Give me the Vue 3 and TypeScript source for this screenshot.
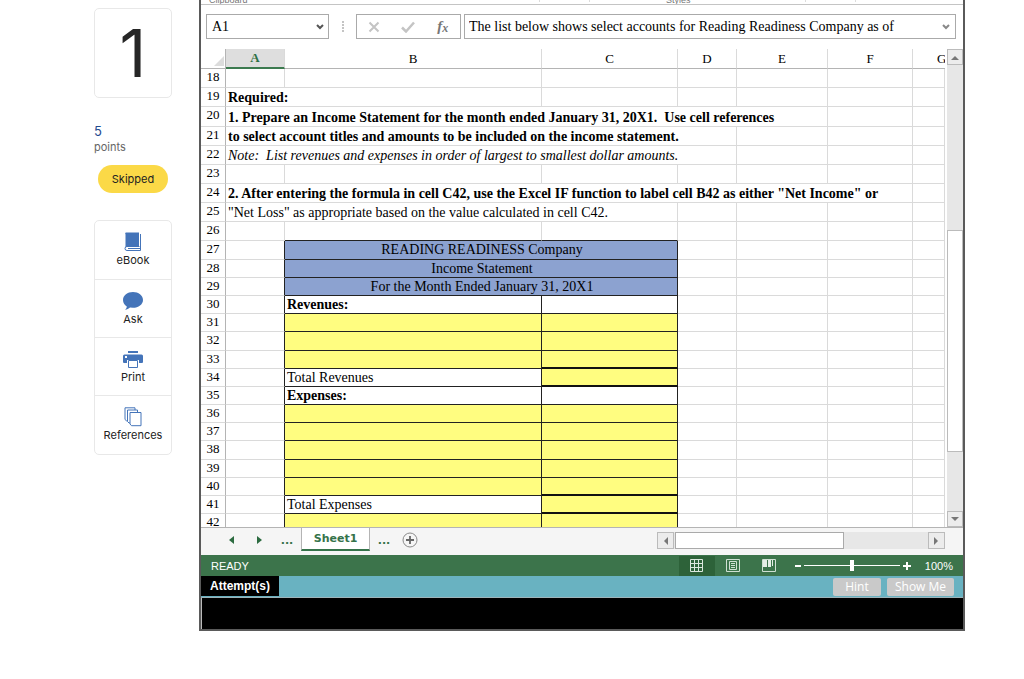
<script setup lang="ts">
import { ref } from 'vue'

interface Cell {
  text?: string
  span?: number
  cls?: string
}
interface Row {
  n: number
  size: string
  cells: Cell[]
}

const columns = ['A', 'B', 'C', 'D', 'E', 'F', 'G']

function plain(n: number, size = 'mid'): Row {
  return { n, size, cells: columns.map(() => ({})) }
}

function note(n: number, text: string, span: number, cls: string, size = 'mid'): Row {
  const rest: Cell[] = Array.from({ length: 7 - span }, () => ({}))
  return { n, size, cells: [{ text, span, cls: `note ${cls}` }, ...rest] }
}

function statement(n: number, b: Cell, c: Cell | null, size = 'low'): Row {
  const cells: Cell[] = [{ cls: 'edge' }, { ...b, cls: `box ${b.cls ?? ''}` }]
  if (c) cells.push({ ...c, cls: `box ${c.cls ?? ''}` })
  return { n, size, cells: [...cells, {}, {}, {}, {}] }
}

const title = (n: number, text: string, size = 'low') =>
  statement(n, { text, span: 2, cls: 'title' }, null, size)
const entry = (n: number, size = 'low', right = '') =>
  statement(n, { cls: 'input' }, { cls: `input ${right}` }, size)

const rows: Row[] = [
  plain(18),
  note(19, 'Required:', 2, 'bold'),
  note(20, '1. Prepare an Income Statement for the month ended January 31, 20X1.\u00a0 Use cell references', 5, 'bold', 'high'),
  note(21, 'to select account titles and amounts to be included on the income statement.', 4, 'bold'),
  note(22, 'Note:\u00a0 List revenues and expenses in order of largest to smallest dollar amounts.', 4, 'italic'),
  plain(23),
  note(24, '2. After entering the formula in cell C42, use the Excel IF function to label cell B42 as either "Net Income" or', 6, 'bold'),
  note(25, '"Net Loss" as appropriate based on the value calculated in cell C42.', 3, ''),
  { n: 26, size: 'mid', cells: [{}, { cls: 'base' }, { cls: 'base' }, {}, {}, {}, {}] },
  title(27, 'READING READINESS Company', 'mid'),
  title(28, 'Income Statement'),
  title(29, 'For the Month Ended January 31, 20X1'),
  statement(30, { text: 'Revenues:', cls: 'bold' }, {}),
  entry(31),
  entry(32, 'mid'),
  entry(33, 'low', 'thick'),
  statement(34, { text: 'Total Revenues' }, { cls: 'input thick' }),
  statement(35, { text: 'Expenses:', cls: 'bold' }, {}),
  entry(36),
  entry(37),
  entry(38, 'mid'),
  entry(39),
  entry(40, 'low', 'thick'),
  statement(41, { text: 'Total Expenses' }, { cls: 'input thick' }),
  entry(42),
]

const tools = ['eBook', 'Ask', 'Print', 'References']
const formula = ref('The list below shows select accounts for Reading Readiness Company as of')
const cellName = ref('A1')
const zoom = ref(50)
</script>

<template>
  <div class="page">
    <aside class="side">
      <div class="number">1</div>
      <div class="score"><a href="#">5</a><span>points</span></div>
      <div class="status">Skipped</div>
      <nav class="tools">
        <button v-for="tool in tools" :key="tool" type="button">
          <svg v-if="tool === 'eBook'" width="20" height="20" viewBox="0 0 20 20">
            <path d="M3 .5h13v14H4.500a2 2 0 0 0-2 2V2.500Q1.500.5 3 .5z" fill="#4474b9" />
            <path d="M17.500 2v16.500H4A2 2 0 0 1 4 14.500h12.500M5 16.500h12" fill="none" stroke="#4474b9" />
          </svg>
          <svg v-else-if="tool === 'Ask'" width="20" height="20" viewBox="0 0 20 20">
            <path d="M10 1c5.500 0 10 3.500 10 8s-4.500 7.800-10 7.800l-3-.3c-1.200 1.300-3 2-5 2.200 1.200-1 1.800-2 1.800-3.200C1.500 14 0 11.700 0 9c0-4.500 4.500-8 10-8z" fill="#4474b9" />
          </svg>
          <svg v-else-if="tool === 'Print'" width="20" height="20" viewBox="0 0 20 20">
            <path d="M5 2h10v2H5z" fill="#4474b9" />
            <path d="M1.500 5.500h17q1.500 0 1.500 1.500v6q0 1-1 1h-3v-3H4v3H1q-1 0-1-1V7q0-1.500 1.500-1.500z" fill="#4474b9" />
            <path d="M5.500 11.500h9v7h-9z" fill="#fff" stroke="#4474b9" />
            <path d="M2 7h2v2H2z" fill="#fff" />
          </svg>
          <svg v-else width="20" height="20" viewBox="0 0 20 20" fill="#fff" stroke="#4474b9">
            <path d="M2 .8h10v13H3.500L2 12.500z" />
            <path d="M4.500 3h10v13H6l-1.500-1.500z" />
            <path d="M7 5.500h11v13.200H8.500L7 17z" />
          </svg>
          <span>{{ tool }}</span>
        </button>
      </nav>
    </aside>

    <main class="window">
      <div class="ribbon">
        <div class="group first">Clipboard</div>
        <div class="group small"></div>
        <div class="group styles">Styles</div>
        <div class="group small"></div>
      </div>

      <div class="formulabar">
        <div class="namebox">
          <input v-model="cellName" aria-label="Cell name" />
          <svg width="8" height="6" viewBox="0 0 8 6"><path d="M1 1l3 3 3-3" fill="none" stroke="#555" stroke-width="2" /></svg>
        </div>
        <span class="dots"><i></i><i></i><i></i><i></i></span>
        <div class="actions">
          <button type="button" aria-label="Cancel">
            <svg width="12" height="12" viewBox="0 0 12 12"><path d="M1.500 1.500l9 9m0-9l-9 9" stroke="#c4c4c4" stroke-width="2" /></svg>
          </button>
          <button type="button" aria-label="Enter">
            <svg width="14" height="12" viewBox="0 0 14 12"><path d="M1 6.500l4 4 8-9" fill="none" stroke="#c4c4c4" stroke-width="2.500" /></svg>
          </button>
          <button type="button" aria-label="Insert function" class="fx">f<small>x</small></button>
        </div>
        <div class="formula">
          <input v-model="formula" aria-label="Formula" />
          <svg width="8" height="6" viewBox="0 0 8 6"><path d="M1 1l3 3 3-3" fill="none" stroke="#888" stroke-width="2" /></svg>
        </div>
      </div>

      <div class="gridpane">
        <div class="viewport">
          <table>
            <colgroup>
              <col class="w-head" /><col class="w-a" /><col /><col class="w-c" />
              <col class="w-d" /><col class="w-e" /><col class="w-f" /><col class="w-g" />
            </colgroup>
            <thead>
              <tr>
                <th class="corner"><svg width="12" height="12" viewBox="0 0 12 12"><path d="M11 1v10H1z" fill="#dcdcdc" /></svg></th>
                <th v-for="c in columns" :key="c" scope="col" :class="{ active: c === 'A', last: c === 'G' }">{{ c }}</th>
              </tr>
            </thead>
            <tbody>
              <tr v-for="row in rows" :key="row.n" :class="row.size">
                <th scope="row">{{ row.n }}</th>
                <td v-for="(cell, i) in row.cells" :key="i" :colspan="cell.span ?? 1" :class="cell.cls">{{ cell.text }}</td>
              </tr>
            </tbody>
          </table>
        </div>
        <div class="vscroll">
          <button type="button" aria-label="Scroll up"><svg width="8" height="5" viewBox="0 0 8 5"><path d="M0 5l4-4 4 4z" fill="#777" /></svg></button>
          <div class="vtrack"><div class="vthumb"></div></div>
          <button type="button" aria-label="Scroll down"><svg width="8" height="5" viewBox="0 0 8 5"><path d="M0 0l4 4 4-4z" fill="#777" /></svg></button>
        </div>
      </div>

      <div class="tabs">
        <button type="button" class="step" aria-label="Previous sheet"><svg width="5" height="8" viewBox="0 0 5 8"><path d="M5 0v8L0 4z" fill="#2c6b40" /></svg></button>
        <button type="button" class="step" aria-label="Next sheet"><svg width="5" height="8" viewBox="0 0 5 8"><path d="M0 0v8l5-4z" fill="#2c6b40" /></svg></button>
        <span class="more">...</span>
        <button type="button" class="sheet">Sheet1</button>
        <span class="more">...</span>
        <button type="button" class="add" aria-label="Add sheet">
          <svg width="16" height="16" viewBox="0 0 16 16"><circle cx="8" cy="8" r="7" fill="none" stroke="#8a8a8a" /><path d="M4 8h8M8 4v8" stroke="#666" stroke-width="1.800" /></svg>
        </button>
        <div class="hscroll">
          <button type="button" aria-label="Scroll left"><svg width="5" height="8" viewBox="0 0 5 8"><path d="M5 0v8L1 4z" fill="#777" /></svg></button>
          <div class="htrack"><div class="hthumb"></div></div>
          <button type="button" aria-label="Scroll right"><svg width="5" height="8" viewBox="0 0 5 8"><path d="M0 0v8l4-4z" fill="#777" /></svg></button>
        </div>
      </div>

      <div class="statusbar">
        <span class="ready">READY</span>
        <button type="button" class="view on" aria-label="Normal view">
          <svg width="13" height="13" viewBox="0 0 13 13" fill="none" stroke="#dbe8de"><path d="M.5.5h12v12H.5zM.5 4.500h12M.5 8.500h12M4.500.5v12M8.500.5v12" /></svg>
        </button>
        <button type="button" class="view" aria-label="Page layout">
          <svg width="14" height="13" viewBox="0 0 14 13" fill="none" stroke="#cfe0d3"><path d="M.5.5h13v12H.5zM3.500 2.500h7v8h-7zM5 4.500h4M5 6.500h4M5 8.500h4" /></svg>
        </button>
        <button type="button" class="view" aria-label="Page break preview">
          <svg width="14" height="13" viewBox="0 0 14 13"><path d="M.5.5h13v12H.5z" fill="none" stroke="#cfe0d3" /><path d="M1 1h4v7H1zM6 1h3v7H6zM10 1h1v6h-1z" fill="#e4eee6" /></svg>
        </button>
        <div class="zoom">
          <button type="button" aria-label="Zoom out"><svg width="6" height="10" viewBox="0 0 6 10"><path d="M0 5h6" stroke="#fff" stroke-width="2" /></svg></button>
          <input v-model="zoom" type="range" min="0" max="100" aria-label="Zoom" />
          <button type="button" aria-label="Zoom in"><svg width="8" height="10" viewBox="0 0 8 10"><path d="M0 5h8M4 1v8" stroke="#fff" stroke-width="2" /></svg></button>
          <span>100%</span>
        </div>
      </div>

      <div class="attempts">
        <strong>Attempt(s)</strong>
        <button type="button" class="hint">Hint</button>
        <button type="button" class="show">Show Me</button>
      </div>
      <div class="console"></div>
    </main>
  </div>
</template>

<style>
body {
  background: #fff;
}
</style>

<style scoped>
* {
  box-sizing: border-box;
}
button,
input {
  margin: 0;
  padding: 0;
  border: 0;
  background: none;
  font: inherit;
  color: inherit;
}
svg {
  display: block;
}
.page {
  display: flex;
  align-items: flex-start;
  padding-right: 59px;
  font-family: Inter, "Open Sans", sans-serif;
}
.side {
  flex: none;
  width: 78px;
  margin: 8px 27px 0 94px;
}
.number {
  height: 90px;
  border: 1px solid #e8e8e8;
  border-radius: 5px;
  font-size: 66px;
  line-height: 88px;
  text-align: center;
  color: #262626;
}
.score {
  display: flex;
  flex-direction: column;
  margin-top: 25px;
  font-size: 11px;
  line-height: 16px;
  color: #666;
}
.score a {
  font-size: 13px;
  color: #1f4b8f;
  text-decoration: none;
}
.status {
  width: 70px;
  height: 28px;
  margin: 10px auto 0;
  border-radius: 14px;
  background: #fbd947;
  font-size: 11px;
  line-height: 28px;
  text-align: center;
  color: #222;
}
.tools {
  margin-top: 27px;
  border: 1px solid #e8e8e8;
  border-radius: 5px;
}
.tools button {
  display: flex;
  flex-direction: column;
  align-items: center;
  width: 100%;
  height: 58px;
  padding-top: 11px;
  font-size: 11px;
  line-height: 16px;
  color: #222;
}
.tools button + button {
  border-top: 1px solid #e8e8e8;
}
.tools button:last-child {
  height: 59px;
}
.window {
  flex: 1;
  min-width: 0;
  border: solid #5a5a5a;
  border-width: 0 2px 2px;
  background: #fff;
  font-family: "Liberation Sans", Arial, sans-serif;
}
.ribbon {
  display: flex;
  height: 5px;
  overflow: hidden;
  border-bottom: 1px solid #c4c4c4;
  font-size: 9px;
  line-height: 0;
  color: #777;
}
.group {
  height: 2px;
  border-right: 1px solid #ddd;
}
.first {
  width: 339px;
  padding-left: 8px;
}
.small {
  width: 50px;
}
.styles {
  width: 216px;
  padding-left: 76px;
}
.formulabar {
  display: flex;
  padding: 9px 7px 10px 5px;
  font-family: "Liberation Serif", "Times New Roman", serif;
  font-size: 14px;
}
.namebox,
.formula {
  display: flex;
  align-items: center;
  height: 25px;
  border: 1px solid #aaa;
}
.namebox {
  width: 123px;
  padding: 0 4px 0 5px;
}
.formula {
  flex: 1;
  margin-left: 3px;
  padding: 0 5px 0 4px;
}
.namebox input,
.formula input {
  flex: 1;
  min-width: 0;
  height: 22px;
  outline: 0;
}
.dots {
  display: flex;
  flex-direction: column;
  justify-content: center;
  align-items: center;
  gap: 1px;
  width: 27px;
}
.dots i {
  width: 2px;
  height: 2px;
  background: #c4c4c4;
}
.actions {
  display: flex;
  align-items: center;
  width: 105px;
  height: 25px;
  border: 1px solid #aaa;
}
.actions button {
  display: flex;
  justify-content: center;
  align-items: center;
  flex: 1;
  height: 23px;
}
.actions .fx {
  font-size: 15px;
  font-weight: bold;
  font-style: italic;
  color: #777;
}
.fx small {
  padding-top: 4px;
  font-size: 12px;
}
.gridpane {
  display: flex;
  height: 478px;
}
.viewport {
  flex: 1;
  min-width: 0;
  overflow: hidden;
}
table {
  width: 100%;
  table-layout: fixed;
  border-collapse: separate;
  border-spacing: 0;
  font-family: "Liberation Serif", "Times New Roman", serif;
  font-size: 14px;
  line-height: 16px;
  color: #000;
}
.w-head { width: 25px; }
.w-a { width: 59px; }
.w-c { width: 136px; }
.w-d { width: 59px; }
.w-e { width: 91px; }
.w-f { width: 85px; }
.w-g { width: 32px; }
th,
td {
  padding: 0;
  border: solid #dadada;
  border-width: 0 1px 1px 0;
  font-weight: normal;
  white-space: nowrap;
  overflow: hidden;
}
thead th {
  height: 20px;
  border-bottom-color: #b4b4b4;
  font-size: 13px;
}
thead .corner {
  padding: 4px 0 0 12px;
  border-right-color: #b4b4b4;
}
thead .active {
  border-bottom: 2px solid #3c7a4f;
  background: #dedede;
  font-weight: bold;
  color: #2f7044;
}
thead .last {
  padding-left: 24px;
  border-right: 0;
  text-align: left;
  text-overflow: clip;
}
tbody th {
  border-right-color: #b4b4b4;
  font-size: 13px;
  line-height: 14px;
  vertical-align: top;
  padding-top: 1px;
}
.low { height: 18px; }
.mid { height: 19px; }
.high { height: 20px; }
.note {
  padding: 2px 0 0 2px;
}
.bold {
  font-weight: bold;
}
.italic {
  font-style: italic;
}
.edge {
  border-right-color: #222;
}
.base {
  border-bottom-color: #222;
}
.box {
  padding-left: 2px;
  border-color: #222;
}
.title {
  background: #8ca2d0;
  text-align: center;
}
.input {
  background: #fffd80;
}
.thick {
  border-bottom: 2px solid #111;
}
.vscroll {
  display: flex;
  flex-direction: column;
  width: 16px;
  margin-left: 2px;
  background: #e7e7e7;
}
.vscroll button,
.hscroll button {
  display: flex;
  flex: none;
  justify-content: center;
  align-items: center;
  width: 16px;
  height: 16px;
  border: 1px solid #bbb;
  background: #ececec;
}
.vtrack {
  display: flex;
  flex-direction: column;
  flex: 1;
}
.vthumb {
  height: 222px;
  margin-top: 165px;
  border: 1px solid #bbb;
  background: #fff;
}
.tabs {
  display: flex;
  align-items: flex-start;
  height: 28px;
  border-top: 1px solid #b4b4b4;
  background: #f5f5f5;
  font-family: "DejaVu Sans", Verdana, sans-serif;
  font-size: 11px;
  font-weight: bold;
  color: #35734a;
}
.step {
  display: flex;
  justify-content: center;
  width: 28px;
  padding-top: 8px;
}
.step:first-child {
  margin-left: 16px;
}
.more {
  width: 28px;
  line-height: 26px;
  text-align: center;
}
.sheet {
  width: 69px;
  height: 23px;
  border: solid #b4b4b4;
  border-width: 0 1px 2px;
  border-bottom-color: #35734a;
  background: #fff;
}
.add {
  margin: 4px 0 0 4px;
}
.hscroll {
  display: flex;
  width: 288px;
  height: 17px;
  margin: 4px 18px 0 auto;
  background: #e7e7e7;
}
.hscroll button {
  width: 17px;
  height: 17px;
}
.htrack {
  flex: 1;
}
.hthumb {
  width: 169px;
  height: 17px;
  margin-left: 1px;
  border: 1px solid #aaa;
  background: #fff;
}
.statusbar {
  display: flex;
  align-items: center;
  height: 21px;
  background: #3c744b;
  font-size: 11px;
  color: #fff;
}
.ready {
  flex: 1;
  padding-left: 10px;
}
.view {
  display: flex;
  justify-content: center;
  align-items: center;
  width: 36px;
  height: 20px;
}
.on {
  background: #2d6239;
}
.zoom {
  display: flex;
  align-items: center;
  padding: 0 10px 0 8px;
}
.zoom input {
  width: 96px;
  height: 11px;
  margin: 0 3px;
  appearance: none;
  background: linear-gradient(#fff, #fff) center / 100% 1px no-repeat;
}
.zoom input::-webkit-slider-thumb {
  appearance: none;
  width: 4px;
  height: 11px;
  background: #fff;
}
.zoom span {
  margin-left: 14px;
}
.attempts {
  display: flex;
  align-items: flex-start;
  height: 22px;
  border-bottom: 1px solid #9fb4ba;
  background: #69b2c1;
  font-size: 12px;
  color: #fff;
}
.attempts strong {
  width: 78px;
  margin-right: auto;
  background: #000;
  line-height: 20px;
  text-align: center;
}
.attempts button {
  height: 18px;
  margin: 2px 9px 0 0;
  border-radius: 2px;
  background: #c9c9c9;
  font-family: "Open Sans", Tahoma, sans-serif;
  font-size: 12px;
  line-height: 18px;
}
.attempts .hint {
  width: 48px;
  margin-right: 6px;
}
.attempts .show {
  width: 67px;
}
.console {
  height: 31px;
  border-left: 1px solid #bbb;
  background: #000;
}
</style>
